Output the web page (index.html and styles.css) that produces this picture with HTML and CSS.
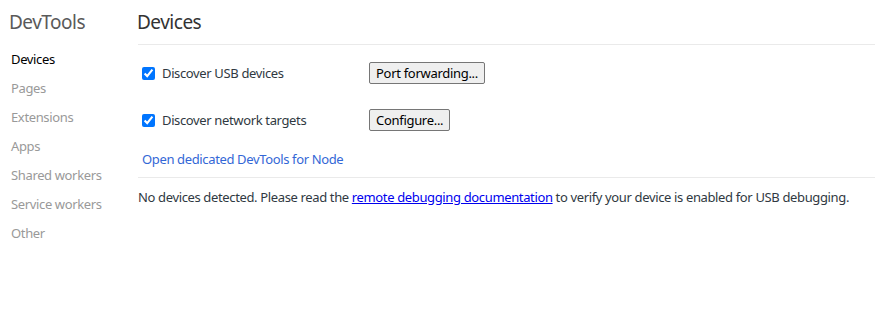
FILE: index.html
```html
<!DOCTYPE html>
<html>
<head>
<meta charset="utf-8">
<link rel="stylesheet" href="styles.css">
</head>
<body>
<div class="page">
  <nav class="sidebar">
    <div class="brand">DevTools</div>
    <ul class="nav">
      <li class="nav-item active">Devices</li>
      <li class="nav-item">Pages</li>
      <li class="nav-item">Extensions</li>
      <li class="nav-item">Apps</li>
      <li class="nav-item">Shared workers</li>
      <li class="nav-item">Service workers</li>
      <li class="nav-item">Other</li>
    </ul>
  </nav>
  <main class="main">
    <header class="header">Devices</header>
    <section class="options">
      <div class="row">
        <label class="check"><input type="checkbox" checked><span>Discover USB devices</span></label>
        <button class="btn">Port forwarding...</button>
      </div>
      <div class="row row-second">
        <label class="check"><input type="checkbox" checked><span>Discover network targets</span></label>
        <button class="btn">Configure...</button>
      </div>
      <a class="node-link" href="#">Open dedicated DevTools for Node</a>
    </section>
    <p class="message">No devices detected. Please read the <a href="#" class="doc-link">remote debugging documentation</a> to verify your device is enabled for USB debugging.</p>
  </main>
</div>
</body>
</html>
```
FILE: styles.css
```css
html, body {
  margin: 0;
  padding: 0;
  background: #fff;
}
body {
  font-family: "Noto Sans", "Open Sans", sans-serif;
  font-size: 13px;
  letter-spacing: -0.36px;
  color: #303942;
}
.page {
  display: flex;
  width: 875px;
}
.sidebar {
  width: 138px;
  flex: none;
}
.brand {
  height: 44px;
  line-height: 44px;
  padding-left: 9px;
  font-size: 19px;
  letter-spacing: -0.5px;
  color: #5a5a5a;
}
.nav {
  list-style: none;
  margin: 1px 0 0;
  padding: 0;
}
.nav-item {
  padding-left: 11px;
  height: 29px;
  line-height: 29px;
  color: #999;
}
.nav-item.active {
  color: #000;
}
.main {
  flex: 1;
}
.header {
  height: 44px;
  line-height: 44px;
  border-bottom: 1px solid #eaeaea;
  font-size: 19px;
  letter-spacing: -0.5px;
  color: #333;
  text-indent: -1px;
}
.options {
  padding: 17px 0 10px 4px;
  border-bottom: 1px solid #eaeaea;
}
.row {
  display: flex;
  align-items: center;
  height: 22px;
}
.row-second {
  margin-top: 25px;
}
.check {
  display: flex;
  align-items: center;
  width: 227px;
}
.check input {
  width: 13px;
  height: 13px;
  margin: 0 7px 0 0;
  accent-color: #0075ff;
}
.btn {
  font-family: inherit;
  font-size: 13px;
  letter-spacing: -0.3px;
  color: #000;
  background: #efefef;
  border: 1px solid #767676;
  border-radius: 2px;
  height: 22px;
  padding: 0 6px;
  line-height: 20px;
}
.node-link {
  display: block;
  margin-top: 20px;
  line-height: 16px;
  color: #3367d6;
  text-decoration: none;
}
.message {
  margin: 11px 0 0;
  line-height: 16px;
  white-space: nowrap;
}
.doc-link {
  color: #0000ee;
}
```
